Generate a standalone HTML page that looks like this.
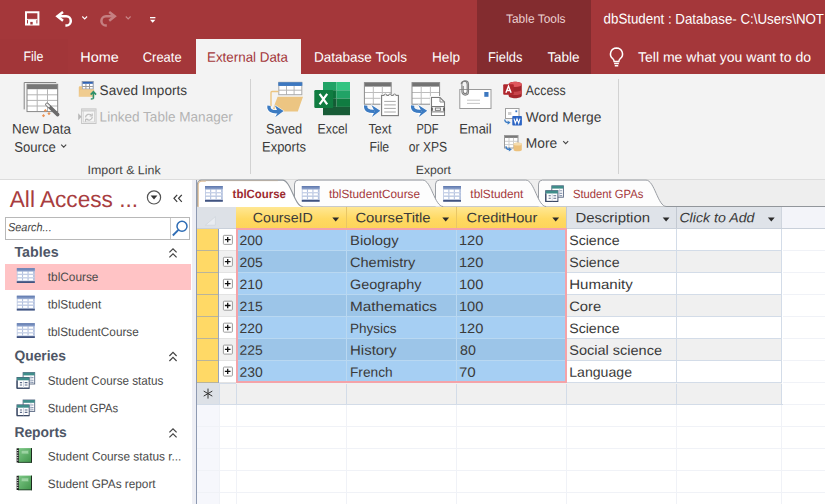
<!DOCTYPE html>
<html><head><meta charset="utf-8"><title>Access</title>
<style>
html,body{margin:0;padding:0;background:#fff;}
#app{position:relative;width:825px;height:504px;overflow:hidden;background:#fff;font-family:"Liberation Sans",sans-serif;}
.a{position:absolute;}
.t{position:absolute;left:0;top:0;white-space:nowrap;transform-origin:0 0;font-family:"Liberation Sans",sans-serif;}
svg{position:absolute;overflow:visible;}

</style></head>
<body>
<div id="app">
<div class="a" style="left:0px;top:0px;width:825px;height:74px;background:#a4373a;"></div>
<div class="a" style="left:0px;top:39px;width:68px;height:35px;background:#a23639;"></div>
<div class="a" style="left:477px;top:0px;width:114px;height:74px;background:#832c2f;"></div>
<div class="a" style="left:196px;top:39px;width:105px;height:35px;background:#f3f3f3;"></div>
<div class="a" style="left:0px;top:74px;width:825px;height:105px;background:#f3f3f3;"></div>
<div class="a" style="left:0px;top:179px;width:825px;height:1px;background:#dcdcdc;"></div>
<div class="a" style="left:250px;top:79px;width:1px;height:95px;background:#d2d2d2;"></div>
<div class="a" style="left:618px;top:79px;width:1px;height:95px;background:#d2d2d2;"></div>
<div class="a" style="left:0px;top:180px;width:192px;height:324px;background:#fff;"></div>
<div class="a" style="left:192px;top:180px;width:4px;height:324px;background:#eeeff5;"></div>
<div class="a" style="left:196px;top:180px;width:1px;height:324px;background:#8e9ab2;"></div>
<div class="a" style="left:5px;top:217px;width:183px;height:21px;background:#fff;border:1px solid #b8b8b8;"></div>
<div class="a" style="left:170px;top:218px;width:1px;height:21px;background:#c9c9c9;"></div>
<div class="a" style="left:5px;top:264px;width:186px;height:26px;background:#ffc3c5;"></div>
<div class="a" style="left:197px;top:180px;width:628px;height:27px;background:#eeeeee;"></div>
<div class="a" style="left:197px;top:206px;width:628px;height:1px;background:#92969b;"></div>
<div class="a" style="left:197px;top:207px;width:39px;height:22px;background:#dde1e7;"></div>
<div class="a" style="left:236px;top:207px;width:330px;height:22px;background:linear-gradient(#ffe793,#ffd961 55%,#fdd45a);"></div>
<div class="a" style="left:346px;top:207px;width:1px;height:22px;background:#e9c665;"></div>
<div class="a" style="left:456px;top:207px;width:1px;height:22px;background:#e9c665;"></div>
<div class="a" style="left:566px;top:207px;width:216px;height:22px;background:#dfe3e9;"></div>
<div class="a" style="left:566px;top:207px;width:1px;height:22px;background:#c3c9d2;"></div>
<div class="a" style="left:676px;top:207px;width:1px;height:22px;background:#c3c9d2;"></div>
<div class="a" style="left:781.2px;top:207px;width:1px;height:22px;background:#cfd5de;"></div>
<div class="a" style="left:782.2px;top:207px;width:43px;height:22px;background:#f3f4f9;"></div>
<div class="a" style="left:197px;top:228.3px;width:628px;height:1px;background:#c9d0da;"></div>
<div class="a" style="left:197px;top:229.05px;width:22px;height:21.95px;background:#ffd966;"></div>
<div class="a" style="left:197px;top:250.0px;width:22px;height:1px;background:#b9b49c;"></div>
<div class="a" style="left:219px;top:229.05px;width:17px;height:21.95px;background:#fff;"></div>
<div class="a" style="left:236px;top:229.05px;width:330px;height:21.95px;background:#a6cff3;"></div>
<div class="a" style="left:566px;top:229.05px;width:216px;height:21.95px;background:#fff;"></div>
<div class="a" style="left:236px;top:250.0px;width:330px;height:1px;background:#b9d8f1;"></div>
<div class="a" style="left:566px;top:250.0px;width:216px;height:1px;background:#d3dce8;"></div>
<div class="a" style="left:219px;top:250.0px;width:17px;height:1px;background:#e3e3e3;"></div>
<div class="a" style="left:197px;top:251.0px;width:22px;height:21.95px;background:#ffd966;"></div>
<div class="a" style="left:197px;top:271.95px;width:22px;height:1px;background:#b9b49c;"></div>
<div class="a" style="left:219px;top:251.0px;width:17px;height:21.95px;background:#f0f0f0;"></div>
<div class="a" style="left:236px;top:251.0px;width:330px;height:21.95px;background:#9cc5e8;"></div>
<div class="a" style="left:566px;top:251.0px;width:216px;height:21.95px;background:#f0f0f0;"></div>
<div class="a" style="left:236px;top:271.95px;width:330px;height:1px;background:#b9d8f1;"></div>
<div class="a" style="left:566px;top:271.95px;width:216px;height:1px;background:#d3dce8;"></div>
<div class="a" style="left:219px;top:271.95px;width:17px;height:1px;background:#e3e3e3;"></div>
<div class="a" style="left:197px;top:272.95px;width:22px;height:21.95px;background:#ffd966;"></div>
<div class="a" style="left:197px;top:293.9px;width:22px;height:1px;background:#b9b49c;"></div>
<div class="a" style="left:219px;top:272.95px;width:17px;height:21.95px;background:#fff;"></div>
<div class="a" style="left:236px;top:272.95px;width:330px;height:21.95px;background:#a6cff3;"></div>
<div class="a" style="left:566px;top:272.95px;width:216px;height:21.95px;background:#fff;"></div>
<div class="a" style="left:236px;top:293.9px;width:330px;height:1px;background:#b9d8f1;"></div>
<div class="a" style="left:566px;top:293.9px;width:216px;height:1px;background:#d3dce8;"></div>
<div class="a" style="left:219px;top:293.9px;width:17px;height:1px;background:#e3e3e3;"></div>
<div class="a" style="left:197px;top:294.9px;width:22px;height:21.95px;background:#ffd966;"></div>
<div class="a" style="left:197px;top:315.84999999999997px;width:22px;height:1px;background:#b9b49c;"></div>
<div class="a" style="left:219px;top:294.9px;width:17px;height:21.95px;background:#f0f0f0;"></div>
<div class="a" style="left:236px;top:294.9px;width:330px;height:21.95px;background:#9cc5e8;"></div>
<div class="a" style="left:566px;top:294.9px;width:216px;height:21.95px;background:#f0f0f0;"></div>
<div class="a" style="left:236px;top:315.84999999999997px;width:330px;height:1px;background:#b9d8f1;"></div>
<div class="a" style="left:566px;top:315.84999999999997px;width:216px;height:1px;background:#d3dce8;"></div>
<div class="a" style="left:219px;top:315.84999999999997px;width:17px;height:1px;background:#e3e3e3;"></div>
<div class="a" style="left:197px;top:316.85px;width:22px;height:21.95px;background:#ffd966;"></div>
<div class="a" style="left:197px;top:337.8px;width:22px;height:1px;background:#b9b49c;"></div>
<div class="a" style="left:219px;top:316.85px;width:17px;height:21.95px;background:#fff;"></div>
<div class="a" style="left:236px;top:316.85px;width:330px;height:21.95px;background:#a6cff3;"></div>
<div class="a" style="left:566px;top:316.85px;width:216px;height:21.95px;background:#fff;"></div>
<div class="a" style="left:236px;top:337.8px;width:330px;height:1px;background:#b9d8f1;"></div>
<div class="a" style="left:566px;top:337.8px;width:216px;height:1px;background:#d3dce8;"></div>
<div class="a" style="left:219px;top:337.8px;width:17px;height:1px;background:#e3e3e3;"></div>
<div class="a" style="left:197px;top:338.8px;width:22px;height:21.95px;background:#ffd966;"></div>
<div class="a" style="left:197px;top:359.75px;width:22px;height:1px;background:#b9b49c;"></div>
<div class="a" style="left:219px;top:338.8px;width:17px;height:21.95px;background:#f0f0f0;"></div>
<div class="a" style="left:236px;top:338.8px;width:330px;height:21.95px;background:#9cc5e8;"></div>
<div class="a" style="left:566px;top:338.8px;width:216px;height:21.95px;background:#f0f0f0;"></div>
<div class="a" style="left:236px;top:359.75px;width:330px;height:1px;background:#b9d8f1;"></div>
<div class="a" style="left:566px;top:359.75px;width:216px;height:1px;background:#d3dce8;"></div>
<div class="a" style="left:219px;top:359.75px;width:17px;height:1px;background:#e3e3e3;"></div>
<div class="a" style="left:197px;top:360.75px;width:22px;height:21.95px;background:#ffd966;"></div>
<div class="a" style="left:197px;top:381.7px;width:22px;height:1px;background:#b9b49c;"></div>
<div class="a" style="left:219px;top:360.75px;width:17px;height:21.95px;background:#fff;"></div>
<div class="a" style="left:236px;top:360.75px;width:330px;height:21.95px;background:#a6cff3;"></div>
<div class="a" style="left:566px;top:360.75px;width:216px;height:21.95px;background:#fff;"></div>
<div class="a" style="left:236px;top:381.7px;width:330px;height:1px;background:#b9d8f1;"></div>
<div class="a" style="left:566px;top:381.7px;width:216px;height:1px;background:#d3dce8;"></div>
<div class="a" style="left:219px;top:381.7px;width:17px;height:1px;background:#e3e3e3;"></div>
<div class="a" style="left:346px;top:229px;width:1px;height:154px;background:#b9d8f1;"></div>
<div class="a" style="left:456px;top:229px;width:1px;height:154px;background:#b9d8f1;"></div>
<div class="a" style="left:676px;top:229px;width:1px;height:176px;background:#d3dce8;"></div>
<div class="a" style="left:781.2px;top:229px;width:1px;height:176px;background:#d3dce8;"></div>
<div class="a" style="left:218px;top:229px;width:1px;height:154px;background:#9aa5bb;"></div>
<div class="a" style="left:236px;top:228.3px;width:327px;height:151.2px;border:2px solid #f4a3a9;"></div>
<div class="a" style="left:197px;top:382.7px;width:22px;height:22px;background:#dde1e7;"></div>
<div class="a" style="left:219px;top:382.7px;width:562.5px;height:21.5px;background:#f0f0f0;"></div>
<div class="a" style="left:219px;top:383.7px;width:1px;height:21px;background:#d3dce8;"></div>
<div class="a" style="left:236px;top:383.7px;width:1px;height:21px;background:#d3dce8;"></div>
<div class="a" style="left:346px;top:383.7px;width:1px;height:21px;background:#d3dce8;"></div>
<div class="a" style="left:456px;top:383.7px;width:1px;height:21px;background:#d3dce8;"></div>
<div class="a" style="left:566px;top:383.7px;width:1px;height:21px;background:#d3dce8;"></div>
<div class="a" style="left:676px;top:383.7px;width:1px;height:21px;background:#d3dce8;"></div>
<div class="a" style="left:781.2px;top:383.7px;width:1px;height:21px;background:#d3dce8;"></div>
<div class="a" style="left:197px;top:403.7px;width:585.5px;height:1px;background:#d3dce8;"></div>
<div class="a" style="left:219px;top:382.7px;width:17px;height:1px;background:#d3dce8;"></div>
<div class="a" style="left:197px;top:404.7px;width:22px;height:100px;background:#f6f7fc;"></div>
<div class="a" style="left:219px;top:404.7px;width:1px;height:100px;background:#f0f2f7;"></div>
<div class="a" style="left:236px;top:404.7px;width:1px;height:100px;background:#f0f2f7;"></div>
<div class="a" style="left:346px;top:404.7px;width:1px;height:100px;background:#f0f2f7;"></div>
<div class="a" style="left:456px;top:404.7px;width:1px;height:100px;background:#f0f2f7;"></div>
<div class="a" style="left:566px;top:404.7px;width:1px;height:100px;background:#f0f2f7;"></div>
<div class="a" style="left:676px;top:404.7px;width:1px;height:100px;background:#f0f2f7;"></div>
<div class="a" style="left:781.2px;top:404.7px;width:1px;height:100px;background:#f0f2f7;"></div>
<div class="a" style="left:197px;top:425.7px;width:628px;height:1px;background:#f0f2f7;"></div>
<div class="a" style="left:197px;top:447.7px;width:628px;height:1px;background:#f0f2f7;"></div>
<div class="a" style="left:197px;top:469.7px;width:628px;height:1px;background:#f0f2f7;"></div>
<div class="a" style="left:197px;top:491.7px;width:628px;height:1px;background:#f0f2f7;"></div>
<div class="a" style="left:782.5px;top:249.7px;width:43px;height:1px;background:#f0f2f7;"></div>
<div class="a" style="left:782.5px;top:271.7px;width:43px;height:1px;background:#f0f2f7;"></div>
<div class="a" style="left:782.5px;top:293.7px;width:43px;height:1px;background:#f0f2f7;"></div>
<div class="a" style="left:782.5px;top:315.7px;width:43px;height:1px;background:#f0f2f7;"></div>
<div class="a" style="left:782.5px;top:337.7px;width:43px;height:1px;background:#f0f2f7;"></div>
<div class="a" style="left:782.5px;top:359.7px;width:43px;height:1px;background:#f0f2f7;"></div>
<div class="a" style="left:782.5px;top:381.7px;width:43px;height:1px;background:#f0f2f7;"></div>
<div class="a" style="left:782.5px;top:403.7px;width:43px;height:1px;background:#f0f2f7;"></div>
<svg style="left:0;top:0" width="825" height="504" viewBox="0 0 825 504"><g transform="translate(25,11.3)"><path d="M1 1h12.4v12.3H1z" fill="none" stroke="#fff" stroke-width="2"/><rect x="2" y="7.6" width="10.4" height="1.2" fill="#fff" opacity="0.85"/><rect x="3" y="8.6" width="8.4" height="5" fill="#fff"/><rect x="5.3" y="10.6" width="2.4" height="2.6" fill="#a4373a"/></g>
<g transform="translate(56,11)"><path d="M1.6 5.3H10.2a4.6 4.6 0 0 1 0 9.2H9.4" fill="none" stroke="#fff" stroke-width="2.5"/><path d="M7 0.9L1.4 5.3l5.6 4.4" fill="none" stroke="#fff" stroke-width="2.5"/></g>
<path d="M82.3 16.5l2.4 2.4 2.4-2.4" fill="none" stroke="#fff" stroke-width="1.1"/>
<g transform="translate(116.2,11) scale(-1,1)" opacity="0.36"><path d="M1.6 5.3H10.2a4.6 4.6 0 0 1 0 9.2H9.4" fill="none" stroke="#fff" stroke-width="2.5"/><path d="M7 0.9L1.4 5.3l5.6 4.4" fill="none" stroke="#fff" stroke-width="2.5"/></g>
<path d="M125.8 16.5l2.4 2.4 2.4-2.4" fill="none" stroke="#fff" stroke-width="1.1" opacity="0.4"/>
<rect x="150" y="17" width="5.4" height="1.3" fill="#fff"/><path d="M150 19.8h5.4l-2.7 2.9z" fill="#fff"/>
<g transform="translate(608.4,46.6) scale(1.08)" fill="none" stroke="#fff"><path d="M7.5 1.2a5.6 5.6 0 0 0-3.4 10c.8.7 1.2 1.5 1.2 2.6h4.4c0-1.1.4-1.9 1.2-2.6a5.6 5.6 0 0 0-3.4-10z" stroke-width="1.4"/><path d="M5.3 15.7h4.4M5.9 17.7h3.2" stroke-width="1.3"/></g>
<path d="M24.2 109.4V82.5H56.2" fill="none" stroke="#858585" stroke-width="1"/>
<rect x="25.6" y="83.4" width="33" height="29" fill="#f8f8f8"/>
<rect x="27" y="84.3" width="30.7" height="27.3" fill="#fff"/><rect x="27" y="84.3" width="30.7" height="4.9" fill="#777777"/><path d="M37.2 89.2V111.6" stroke="#b4b4b4" stroke-width="1"/><path d="M47.5 89.2V111.6" stroke="#b4b4b4" stroke-width="1"/><path d="M27 94.8H57.7" stroke="#b4b4b4" stroke-width="1"/><path d="M27 100.4H57.7" stroke="#b4b4b4" stroke-width="1"/><path d="M27 106.0H57.7" stroke="#b4b4b4" stroke-width="1"/><rect x="27" y="84.3" width="30.7" height="27.3" fill="none" stroke="#858585" stroke-width="1"/>
<path d="M47 104.4l10.7 10.2" stroke="#6b6b6b" stroke-width="3.6" stroke-linecap="round"/><path d="M47 104.4l1.9 1.8" stroke="#f0f0f0" stroke-width="2" stroke-linecap="round"/>
<path d="M45.4 108.9l1.6 1.6-1.6 1.6-1.6-1.6z M49 112l1.6 1.6-1.6 1.6-1.6-1.6z M43.5 114.1l1.6 1.6-1.6 1.6-1.6-1.6z" fill="#ea9254"/>
<path d="M61.2 144.7l2.5 2.5 2.5-2.5" fill="none" stroke="#444" stroke-width="1.1"/>
<rect x="82.2" y="81.5" width="11" height="7.6" fill="#fff"/><rect x="82.2" y="81.5" width="11" height="2.3" fill="#2f63b5"/><path d="M85.9 83.8V89.1" stroke="#9a9a9a" stroke-width="1"/><path d="M89.5 83.8V89.1" stroke="#9a9a9a" stroke-width="1"/><path d="M82.2 86.5H93.2" stroke="#9a9a9a" stroke-width="1"/><rect x="82.2" y="81.5" width="11" height="7.6" fill="none" stroke="#8f9bb0" stroke-width="1"/>
<path d="M78.8 96.6V87.3a1 1 0 0 1 1-1h2.4v3h11.9v7.3z" fill="#ecc483"/><path d="M78.8 96.6l1.2-6.6h14.1v6.6z" fill="#f0cc90"/>
<path d="M93.4 98.4v-6.2M90.7 94.6l2.7-2.9 2.7 2.9" fill="none" stroke="#2e906a" stroke-width="1.6"/><path d="M93.4 98.2c0 .6-1.2.8-2.6.8" fill="none" stroke="#2e906a" stroke-width="1.3"/>
<rect x="81.6" y="108.9" width="14.4" height="14.6" fill="#f6f6f6" stroke="#c6c6c6"/><rect x="83.2" y="110.6" width="11.2" height="11.4" fill="none" stroke="#cfcfcf" stroke-width="0.8"/><rect x="82" y="109.4" width="13.6" height="2.2" fill="#d2d2d2"/>
<path d="M78.2 113.2l3.4 3.5-3.4 3.5z" fill="#b8b8b8"/>
<path d="M85.5 117.4a3.4 3.4 0 0 1 6-1.9M92.3 117a3.4 3.4 0 0 1-6 1.9" fill="none" stroke="#bcbcbc" stroke-width="1.2"/><path d="M92.2 113.4v2.6h-2.6M85.6 121.8v-2.6h2.6" fill="none" stroke="#bcbcbc" stroke-width="1.1"/>
<rect x="278.8" y="82.3" width="23" height="12.4" fill="#fff"/><rect x="278.8" y="82.3" width="23" height="3.5" fill="#3d78c0"/><path d="M286.5 85.8V94.7" stroke="#b5b5b5" stroke-width="1"/><path d="M294.1 85.8V94.7" stroke="#b5b5b5" stroke-width="1"/><path d="M278.8 90.2H301.8" stroke="#b5b5b5" stroke-width="1"/><rect x="278.8" y="82.3" width="23" height="12.4" fill="none" stroke="#a9a9a9" stroke-width="1"/>
<rect x="278.3" y="82.3" width="24" height="3.5" fill="#3d78c0"/>
<path d="M278.5 91.5h-6.5a1 1 0 0 0-1 1v14" fill="none" stroke="#ecc582" stroke-width="1.4"/>
<path d="M277.6 96.8H303l-5.2 14.8H274.3l-1.2-3.2z" fill="#ecc582"/>
<g transform="translate(267.4,105)"><path d="M1.6 0.6c-.6 4.6 2.8 6.6 9 6.2" fill="none" stroke="#fff" stroke-width="5" opacity="0.9"/><path d="M7.2 -0.6l9.9 6.6-9.4 6.8z" fill="#fff" opacity="0.9"/><path d="M1.6 0.8c-.6 4.4 2.8 6.3 9 5.9" fill="none" stroke="#3c7bc2" stroke-width="3.3"/><path d="M7.3 0.2L16.2 6.1L7.8 12.2L10.6 6.9Z" fill="#3c7bc2"/></g>
<rect x="323" y="82" width="13.5" height="8.3" fill="#21a366"/><rect x="336.5" y="82" width="13.5" height="8.3" fill="#33c481"/>
<rect x="323" y="90.3" width="13.5" height="8.3" fill="#107c41"/><rect x="336.5" y="90.3" width="13.5" height="8.3" fill="#21a366"/>
<rect x="323" y="98.6" width="13.5" height="8.3" fill="#185c37"/><rect x="336.5" y="98.6" width="13.5" height="8.3" fill="#107c41"/>
<rect x="323" y="106.9" width="27" height="8.3" fill="#185c37"/>
<rect x="314.3" y="90" width="19" height="18" rx="1.2" fill="#107c41"/><rect x="333.3" y="90.5" width="2" height="17.5" fill="#0b5a30" opacity="0.35"/>
<path d="M319.6 93.8l7.6 10.6M327.2 93.8l-7.6 10.6" stroke="#fff" stroke-width="2.2"/>
<rect x="364.4" y="82.6" width="26.8" height="21.6" fill="#fff"/><rect x="364.4" y="82.6" width="26.8" height="4" fill="#727272"/><path d="M373.3 86.6V104.19999999999999" stroke="#bdbdbd" stroke-width="1"/><path d="M382.3 86.6V104.19999999999999" stroke="#bdbdbd" stroke-width="1"/><path d="M364.4 92.5H391.2" stroke="#bdbdbd" stroke-width="1"/><path d="M364.4 98.3H391.2" stroke="#bdbdbd" stroke-width="1"/><rect x="364.4" y="82.6" width="26.8" height="21.6" fill="none" stroke="#8c8c8c" stroke-width="1"/>
<rect x="380.4" y="94" width="19.2" height="22.8" fill="#f3f3f3"/><rect x="381.6" y="95.4" width="16.8" height="20.2" fill="#fff" stroke="#7c7c7c" stroke-width="1.1"/>
<path d="M385.4 94.3v2.2M390 94.3v2.2M394.6 94.3v2.2" stroke="#f3f3f3" stroke-width="2.2"/><path d="M384 95.4a1.4 1.4 0 0 1 2.8 0M388.6 95.4a1.4 1.4 0 0 1 2.8 0M393.2 95.4a1.4 1.4 0 0 1 2.8 0" fill="none" stroke="#7c7c7c" stroke-width="0.9"/>
<path d="M384.2 101.4h11.6M384.2 104.9h11.6M384.2 108.4h11.6M384.2 112h11.6" stroke="#a8a8a8" stroke-width="1"/>
<g transform="translate(364.1,104.7)"><path d="M1.6 0.6c-.6 4.6 2.8 6.6 9 6.2" fill="none" stroke="#fff" stroke-width="5" opacity="0.9"/><path d="M7.2 -0.6l9.9 6.6-9.4 6.8z" fill="#fff" opacity="0.9"/><path d="M1.6 0.8c-.6 4.4 2.8 6.3 9 5.9" fill="none" stroke="#3c7bc2" stroke-width="3.3"/><path d="M7.3 0.2L16.2 6.1L7.8 12.2L10.6 6.9Z" fill="#3c7bc2"/></g>
<rect x="412" y="82.6" width="27.6" height="21.6" fill="#fff"/><rect x="412" y="82.6" width="27.6" height="4" fill="#727272"/><path d="M421.2 86.6V104.19999999999999" stroke="#bdbdbd" stroke-width="1"/><path d="M430.4 86.6V104.19999999999999" stroke="#bdbdbd" stroke-width="1"/><path d="M412 92.5H439.6" stroke="#bdbdbd" stroke-width="1"/><path d="M412 98.3H439.6" stroke="#bdbdbd" stroke-width="1"/><rect x="412" y="82.6" width="27.6" height="21.6" fill="none" stroke="#8c8c8c" stroke-width="1"/>
<rect x="430" y="96" width="16" height="20.8" fill="#f3f3f3"/><path d="M431.5 97.5h8.5l4.5 4.5v13.5h-13z" fill="#fff" stroke="#7c7c7c" stroke-width="1.1"/><path d="M440 97.5v4.5h4.5" fill="none" stroke="#8a8a8a"/>
<rect x="431.5" y="106.5" width="13" height="5.4" fill="#f1f1f1" stroke="#7a7a7a"/><rect x="435.4" y="108" width="5" height="2.4" fill="none" stroke="#7a7a7a" stroke-width="0.9"/><rect x="431.2" y="107.6" width="1.6" height="3.2" fill="#555"/><rect x="443.2" y="107.6" width="1.6" height="3.2" fill="#555"/>
<g transform="translate(411,104.7)"><path d="M1.6 0.6c-.6 4.6 2.8 6.6 9 6.2" fill="none" stroke="#fff" stroke-width="5" opacity="0.9"/><path d="M7.2 -0.6l9.9 6.6-9.4 6.8z" fill="#fff" opacity="0.9"/><path d="M1.6 0.8c-.6 4.4 2.8 6.3 9 5.9" fill="none" stroke="#3c7bc2" stroke-width="3.3"/><path d="M7.3 0.2L16.2 6.1L7.8 12.2L10.6 6.9Z" fill="#3c7bc2"/></g>
<rect x="459.8" y="89.5" width="31.2" height="19" fill="#fff" stroke="#9a9a9a"/>
<rect x="484.3" y="92" width="4.2" height="4.8" fill="#3d78c0"/>
<path d="M467 100.2h13M467 103.4h13" stroke="#c6c6c6" stroke-width="1"/>
<path d="M463.2 86v5.6a2 2 0 0 0 4 0V84.3a3 3 0 0 0-6 0" fill="none" stroke="#7f7f7f" stroke-width="1.1"/><path d="M461.2 84.3v7.6a4 4 0 0 0 7.6 0" fill="none" stroke="#7f7f7f" stroke-width="1.1" opacity="0"/>
<path d="M461.9 84.4v7.4a3.3 3.3 0 0 0 6.6 0V84.2a3.3 3.3 0 0 0-6.6 0" fill="none" stroke="#7f7f7f" stroke-width="1.1"/>
<path d="M508.6 84.4c0-3.4 13.2-3.4 13.2 0v11.2c0 3.6-13.2 3.6-13.2 0z" fill="#a4262c"/><ellipse cx="515.2" cy="84.4" rx="6.6" ry="2.7" fill="#e0575d"/><path d="M508.6 89.6c1 2.8 12.2 2.8 13.2 0v3.4c-1 2.8-12.2 2.8-13.2 0z" fill="#c8444a"/>
<rect x="503.2" y="84.2" width="10.6" height="10.6" rx="1" fill="#b0262c"/><path d="M505.9 92.7l2.6-6.6 2.6 6.6M506.9 90.5h3.2" fill="none" stroke="#fff" stroke-width="1.4"/>
<rect x="505.5" y="108.5" width="13.5" height="10" fill="#fff" stroke="#a0a0a0"/><rect x="508" y="112" width="3.4" height="3" fill="#d0d0d0"/><rect x="515.4" y="110.4" width="1.8" height="1.8" fill="#3d78c0"/>
<rect x="512.3" y="116" width="9.6" height="9.6" rx="0.8" fill="#2b64c4"/><path d="M514 118.6l1.3 4.6 1.7-4.4 1.7 4.4 1.3-4.6" fill="none" stroke="#fff" stroke-width="1.1"/>
<path d="M504.8 119.6c0 2.2 1.2 3 3.4 3" fill="none" stroke="#3d7cc4" stroke-width="1.4"/><path d="M507.6 120.4l3 2.2-3 2.2z" fill="#3d7cc4"/>
<rect x="504.5" y="135.5" width="13.5" height="12.5" fill="#fff"/><rect x="504.5" y="135.5" width="13.5" height="2.4" fill="#7a7a7a"/><path d="M509.0 137.9V148.0" stroke="#cdcdcd" stroke-width="1"/><path d="M513.5 137.9V148.0" stroke="#cdcdcd" stroke-width="1"/><path d="M504.5 141.3H518.0" stroke="#cdcdcd" stroke-width="1"/><path d="M504.5 144.6H518.0" stroke="#cdcdcd" stroke-width="1"/><rect x="504.5" y="135.5" width="13.5" height="12.5" fill="none" stroke="#9a9a9a" stroke-width="1"/>
<path d="M513.6 144c0-1.6 8.2-1.6 8.2 0v6c0 1.8-8.2 1.8-8.2 0z" fill="#ecc17c"/><ellipse cx="517.7" cy="144" rx="4.1" ry="1.5" fill="#f5dcae"/>
<path d="M506 146.2c0 2.4 1.2 3.2 3.4 3.2" fill="none" stroke="#3d7cc4" stroke-width="1.4"/><path d="M508.8 147.2l3 2.2-3 2.2z" fill="#3d7cc4"/>
<path d="M563.2 141.2l2.5 2.5 2.5-2.5" fill="none" stroke="#444" stroke-width="1.1"/>
<circle cx="154" cy="197.4" r="6.6" fill="#fff" stroke="#555" stroke-width="1.2"/><path d="M150.6 195.6h6.8l-3.4 4z" fill="#333"/>
<path d="M177.2 194.8l-3.2 3.5 3.2 3.5M181.8 194.8l-3.2 3.5 3.2 3.5" fill="none" stroke="#3c3c3c" stroke-width="1.25"/>
<circle cx="182" cy="226.2" r="5" fill="none" stroke="#2f6db5" stroke-width="1.5"/><path d="M178.4 229.9l-5.6 5.6" stroke="#2f6db5" stroke-width="1.9"/>
<path d="M169.4 252.39999999999998l3.6-3.6 3.6 3.6M169.4 257.4l3.6-3.6 3.6 3.6" fill="none" stroke="#444" stroke-width="1.2"/>
<path d="M169.4 356.0l3.6-3.6 3.6 3.6M169.4 361.0l3.6-3.6 3.6 3.6" fill="none" stroke="#444" stroke-width="1.2"/>
<path d="M169.4 432.4l3.6-3.6 3.6 3.6M169.4 437.4l3.6-3.6 3.6 3.6" fill="none" stroke="#444" stroke-width="1.2"/>
<defs><linearGradient id="th" x1="0" y1="0" x2="0" y2="1"><stop offset="0" stop-color="#5b75ab"/><stop offset="1" stop-color="#8fa4cd"/></linearGradient></defs>
<defs><linearGradient id="rg" x1="0" y1="0" x2="1" y2="1"><stop offset="0" stop-color="#7fca88"/><stop offset="1" stop-color="#3f9349"/></linearGradient></defs>
<g transform="translate(16.8,268.2)"><rect x="0" y="0" width="18" height="14.8" fill="#b3c1de"/><rect x="0" y="0" width="18" height="3.03" fill="url(#th)"/><rect x="0.75" y="3.53" width="4.43" height="2.07" fill="#fff"/><rect x="6.28" y="3.53" width="4.43" height="2.07" fill="#fff"/><rect x="11.82" y="3.53" width="4.43" height="2.07" fill="#fff"/><rect x="0.4" y="5.61" width="17.2" height="0.6" fill="#d6deef"/><rect x="0.75" y="6.86" width="4.43" height="2.07" fill="#fff"/><rect x="6.28" y="6.86" width="4.43" height="2.07" fill="#fff"/><rect x="11.82" y="6.86" width="4.43" height="2.07" fill="#fff"/><rect x="0.4" y="8.93" width="17.2" height="0.6" fill="#d6deef"/><rect x="0.75" y="10.18" width="4.43" height="2.07" fill="#fff"/><rect x="6.28" y="10.18" width="4.43" height="2.07" fill="#fff"/><rect x="11.82" y="10.18" width="4.43" height="2.07" fill="#fff"/><rect x="0.4" y="12.25" width="17.2" height="0.6" fill="#d6deef"/><rect x="0" y="13.0" width="18" height="1.8" fill="#41537f"/></g>
<g transform="translate(16.8,295.7)"><rect x="0" y="0" width="18" height="14.8" fill="#b3c1de"/><rect x="0" y="0" width="18" height="3.03" fill="url(#th)"/><rect x="0.75" y="3.53" width="4.43" height="2.07" fill="#fff"/><rect x="6.28" y="3.53" width="4.43" height="2.07" fill="#fff"/><rect x="11.82" y="3.53" width="4.43" height="2.07" fill="#fff"/><rect x="0.4" y="5.61" width="17.2" height="0.6" fill="#d6deef"/><rect x="0.75" y="6.86" width="4.43" height="2.07" fill="#fff"/><rect x="6.28" y="6.86" width="4.43" height="2.07" fill="#fff"/><rect x="11.82" y="6.86" width="4.43" height="2.07" fill="#fff"/><rect x="0.4" y="8.93" width="17.2" height="0.6" fill="#d6deef"/><rect x="0.75" y="10.18" width="4.43" height="2.07" fill="#fff"/><rect x="6.28" y="10.18" width="4.43" height="2.07" fill="#fff"/><rect x="11.82" y="10.18" width="4.43" height="2.07" fill="#fff"/><rect x="0.4" y="12.25" width="17.2" height="0.6" fill="#d6deef"/><rect x="0" y="13.0" width="18" height="1.8" fill="#41537f"/></g>
<g transform="translate(16.8,323.2)"><rect x="0" y="0" width="18" height="14.8" fill="#b3c1de"/><rect x="0" y="0" width="18" height="3.03" fill="url(#th)"/><rect x="0.75" y="3.53" width="4.43" height="2.07" fill="#fff"/><rect x="6.28" y="3.53" width="4.43" height="2.07" fill="#fff"/><rect x="11.82" y="3.53" width="4.43" height="2.07" fill="#fff"/><rect x="0.4" y="5.61" width="17.2" height="0.6" fill="#d6deef"/><rect x="0.75" y="6.86" width="4.43" height="2.07" fill="#fff"/><rect x="6.28" y="6.86" width="4.43" height="2.07" fill="#fff"/><rect x="11.82" y="6.86" width="4.43" height="2.07" fill="#fff"/><rect x="0.4" y="8.93" width="17.2" height="0.6" fill="#d6deef"/><rect x="0.75" y="10.18" width="4.43" height="2.07" fill="#fff"/><rect x="6.28" y="10.18" width="4.43" height="2.07" fill="#fff"/><rect x="11.82" y="10.18" width="4.43" height="2.07" fill="#fff"/><rect x="0.4" y="12.25" width="17.2" height="0.6" fill="#d6deef"/><rect x="0" y="13.0" width="18" height="1.8" fill="#41537f"/></g>
<g transform="translate(16.5,372.2)"><rect x="6.6" y="0.4" width="11.6" height="11.4" fill="#fff" stroke="#55647f" stroke-width="0.9"/><rect x="6.6" y="0.4" width="11.6" height="2.8" fill="#3f8d8a"/><path d="M13.6 5.4h3.4M13.6 8h3.4M13.6 10.2h3.4" stroke="#8c9ab3" stroke-width="1.1"/><path d="M14.4 3.4v8" stroke="#c5cddb" stroke-width="0.8"/><rect x="0.5" y="5.3" width="12.2" height="10.8" fill="#fff" stroke="#4a5975" stroke-width="1"/><rect x="0.5" y="5.3" width="12.2" height="2.8" fill="#3f8d8a"/><path d="M0.6 8.4v7.6" stroke="#3a4864" stroke-width="1.2"/><path d="M0.5 16h12.2" stroke="#3a4864" stroke-width="1.1"/><path d="M3.4 10.4h2.2M3.4 12.8h2.2M8.2 10.4h2.8M8.2 12.8h2.8" stroke="#5d6c8a" stroke-width="1.1"/><path d="M7 8.2v7.6" stroke="#c5cddb" stroke-width="0.8"/></g>
<g transform="translate(16.5,399.6)"><rect x="6.6" y="0.4" width="11.6" height="11.4" fill="#fff" stroke="#55647f" stroke-width="0.9"/><rect x="6.6" y="0.4" width="11.6" height="2.8" fill="#3f8d8a"/><path d="M13.6 5.4h3.4M13.6 8h3.4M13.6 10.2h3.4" stroke="#8c9ab3" stroke-width="1.1"/><path d="M14.4 3.4v8" stroke="#c5cddb" stroke-width="0.8"/><rect x="0.5" y="5.3" width="12.2" height="10.8" fill="#fff" stroke="#4a5975" stroke-width="1"/><rect x="0.5" y="5.3" width="12.2" height="2.8" fill="#3f8d8a"/><path d="M0.6 8.4v7.6" stroke="#3a4864" stroke-width="1.2"/><path d="M0.5 16h12.2" stroke="#3a4864" stroke-width="1.1"/><path d="M3.4 10.4h2.2M3.4 12.8h2.2M8.2 10.4h2.8M8.2 12.8h2.8" stroke="#5d6c8a" stroke-width="1.1"/><path d="M7 8.2v7.6" stroke="#c5cddb" stroke-width="0.8"/></g>
<g transform="translate(16.4,448.1)"><rect x="1.6" y="0" width="13.8" height="14.4" fill="url(#rg)"/><rect x="4.8" y="2.4" width="7.2" height="3.4" fill="#9bd3a1" stroke="#6fb678" stroke-width="0.6"/><rect x="14.6" y="0" width="1" height="14.6" fill="#1c2a1e"/><rect x="1.6" y="13.8" width="14" height="0.9" fill="#23402a"/><rect x="0.2" y="0.2" width="2.2" height="14.2" fill="#1d1d1d"/><path d="M0.4 2.4h1.5M0.4 4.8h1.5M0.4 7.2h1.5M0.4 9.6h1.5M0.4 12h1.5" stroke="#fff" stroke-width="0.9"/></g>
<g transform="translate(16.4,475.6)"><rect x="1.6" y="0" width="13.8" height="14.4" fill="url(#rg)"/><rect x="4.8" y="2.4" width="7.2" height="3.4" fill="#9bd3a1" stroke="#6fb678" stroke-width="0.6"/><rect x="14.6" y="0" width="1" height="14.6" fill="#1c2a1e"/><rect x="1.6" y="13.8" width="14" height="0.9" fill="#23402a"/><rect x="0.2" y="0.2" width="2.2" height="14.2" fill="#1d1d1d"/><path d="M0.4 2.4h1.5M0.4 4.8h1.5M0.4 7.2h1.5M0.4 9.6h1.5M0.4 12h1.5" stroke="#fff" stroke-width="0.9"/></g>
<path d="M538.5 206.5V184.1a4 4 0 0 1 4-4H646c8.5 0 11.8 26.400000000000006 20.3 26.400000000000006Z" fill="#fdfdfd"/>
<path d="M538.5 206.5V184.1a4 4 0 0 1 4-4H646c8.5 0 11.8 26.400000000000006 20.3 26.400000000000006" fill="none" stroke="#9a9ea4" stroke-width="1"/>
<path d="M435.5 206.5V184.1a4 4 0 0 1 4-4H525.8c8.5 0 11.8 26.400000000000006 20.3 26.400000000000006Z" fill="#fdfdfd"/>
<path d="M435.5 206.5V184.1a4 4 0 0 1 4-4H525.8c8.5 0 11.8 26.400000000000006 20.3 26.400000000000006" fill="none" stroke="#9a9ea4" stroke-width="1"/>
<path d="M294.5 206.5V184.1a4 4 0 0 1 4-4H422.8c8.5 0 11.8 26.400000000000006 20.3 26.400000000000006Z" fill="#fdfdfd"/>
<path d="M294.5 206.5V184.1a4 4 0 0 1 4-4H422.8c8.5 0 11.8 26.400000000000006 20.3 26.400000000000006" fill="none" stroke="#9a9ea4" stroke-width="1"/>
<path d="M197.5 206.5V184.1a4 4 0 0 1 4-4H282.5c8.5 0 11.8 26.400000000000006 20.3 26.400000000000006V207H197.5Z" fill="#fff"/>
<path d="M197.5 206.5V184.1a4 4 0 0 1 4-4H282.5c8.5 0 11.8 26.400000000000006 20.3 26.400000000000006" fill="none" stroke="#8f959c" stroke-width="1.1"/>
<path d="M198.2 207V184.8a3.6 3.6 0 0 1 3.6-3.6h4" fill="none" stroke="#e0c09a" stroke-width="1.2"/><path d="M205.8 180.7h72" fill="none" stroke="#c9b090" stroke-width="0.9" opacity="0.55"/>
<g transform="translate(205,186)"><rect x="0" y="0" width="17.8" height="15.7" fill="#b3c1de"/><rect x="0" y="0" width="17.8" height="3.22" fill="url(#th)"/><rect x="0.75" y="3.72" width="4.37" height="2.31" fill="#fff"/><rect x="6.22" y="3.72" width="4.37" height="2.31" fill="#fff"/><rect x="11.68" y="3.72" width="4.37" height="2.31" fill="#fff"/><rect x="0.4" y="6.03" width="17.0" height="0.6" fill="#d6deef"/><rect x="0.75" y="7.28" width="4.37" height="2.31" fill="#fff"/><rect x="6.22" y="7.28" width="4.37" height="2.31" fill="#fff"/><rect x="11.68" y="7.28" width="4.37" height="2.31" fill="#fff"/><rect x="0.4" y="9.59" width="17.0" height="0.6" fill="#d6deef"/><rect x="0.75" y="10.84" width="4.37" height="2.31" fill="#fff"/><rect x="6.22" y="10.84" width="4.37" height="2.31" fill="#fff"/><rect x="11.68" y="10.84" width="4.37" height="2.31" fill="#fff"/><rect x="0.4" y="13.15" width="17.0" height="0.6" fill="#d6deef"/><rect x="0" y="13.899999999999999" width="17.8" height="1.8" fill="#41537f"/></g>
<g transform="translate(301.8,186)"><rect x="0" y="0" width="17.8" height="15.7" fill="#b3c1de"/><rect x="0" y="0" width="17.8" height="3.22" fill="url(#th)"/><rect x="0.75" y="3.72" width="4.37" height="2.31" fill="#fff"/><rect x="6.22" y="3.72" width="4.37" height="2.31" fill="#fff"/><rect x="11.68" y="3.72" width="4.37" height="2.31" fill="#fff"/><rect x="0.4" y="6.03" width="17.0" height="0.6" fill="#d6deef"/><rect x="0.75" y="7.28" width="4.37" height="2.31" fill="#fff"/><rect x="6.22" y="7.28" width="4.37" height="2.31" fill="#fff"/><rect x="11.68" y="7.28" width="4.37" height="2.31" fill="#fff"/><rect x="0.4" y="9.59" width="17.0" height="0.6" fill="#d6deef"/><rect x="0.75" y="10.84" width="4.37" height="2.31" fill="#fff"/><rect x="6.22" y="10.84" width="4.37" height="2.31" fill="#fff"/><rect x="11.68" y="10.84" width="4.37" height="2.31" fill="#fff"/><rect x="0.4" y="13.15" width="17.0" height="0.6" fill="#d6deef"/><rect x="0" y="13.899999999999999" width="17.8" height="1.8" fill="#41537f"/></g>
<g transform="translate(443.2,186)"><rect x="0" y="0" width="17.8" height="15.7" fill="#b3c1de"/><rect x="0" y="0" width="17.8" height="3.22" fill="url(#th)"/><rect x="0.75" y="3.72" width="4.37" height="2.31" fill="#fff"/><rect x="6.22" y="3.72" width="4.37" height="2.31" fill="#fff"/><rect x="11.68" y="3.72" width="4.37" height="2.31" fill="#fff"/><rect x="0.4" y="6.03" width="17.0" height="0.6" fill="#d6deef"/><rect x="0.75" y="7.28" width="4.37" height="2.31" fill="#fff"/><rect x="6.22" y="7.28" width="4.37" height="2.31" fill="#fff"/><rect x="11.68" y="7.28" width="4.37" height="2.31" fill="#fff"/><rect x="0.4" y="9.59" width="17.0" height="0.6" fill="#d6deef"/><rect x="0.75" y="10.84" width="4.37" height="2.31" fill="#fff"/><rect x="6.22" y="10.84" width="4.37" height="2.31" fill="#fff"/><rect x="11.68" y="10.84" width="4.37" height="2.31" fill="#fff"/><rect x="0.4" y="13.15" width="17.0" height="0.6" fill="#d6deef"/><rect x="0" y="13.899999999999999" width="17.8" height="1.8" fill="#41537f"/></g>
<g transform="translate(545.2,185.4)"><rect x="6.6" y="0.4" width="11.6" height="11.4" fill="#fff" stroke="#55647f" stroke-width="0.9"/><rect x="6.6" y="0.4" width="11.6" height="2.8" fill="#3f8d8a"/><path d="M13.6 5.4h3.4M13.6 8h3.4M13.6 10.2h3.4" stroke="#8c9ab3" stroke-width="1.1"/><path d="M14.4 3.4v8" stroke="#c5cddb" stroke-width="0.8"/><rect x="0.5" y="5.3" width="12.2" height="10.8" fill="#fff" stroke="#4a5975" stroke-width="1"/><rect x="0.5" y="5.3" width="12.2" height="2.8" fill="#3f8d8a"/><path d="M0.6 8.4v7.6" stroke="#3a4864" stroke-width="1.2"/><path d="M0.5 16h12.2" stroke="#3a4864" stroke-width="1.1"/><path d="M3.4 10.4h2.2M3.4 12.8h2.2M8.2 10.4h2.8M8.2 12.8h2.8" stroke="#5d6c8a" stroke-width="1.1"/><path d="M7 8.2v7.6" stroke="#c5cddb" stroke-width="0.8"/></g>
<path d="M205.4 225.2l10-8.6v8.6z" fill="#e9ecf1" stroke="#d0d5dd" stroke-width="0.7"/>
<path d="M332.29999999999995 217.39999999999998h6.8l-3.4 4z" fill="#2a2a2a"/>
<path d="M442.29999999999995 217.39999999999998h6.8l-3.4 4z" fill="#2a2a2a"/>
<path d="M552.3 217.39999999999998h6.8l-3.4 4z" fill="#2a2a2a"/>
<path d="M662.6999999999999 217.39999999999998h6.8l-3.4 4z" fill="#2a2a2a"/>
<path d="M767.9 217.39999999999998h6.8l-3.4 4z" fill="#2a2a2a"/>
<rect x="223.4" y="235.35" width="9" height="9" rx="0.8" fill="#fff" stroke="#9c9c9c" stroke-width="1"/><path d="M224.9 239.65h5.6M227.7 236.95v5.4" stroke="#111" stroke-width="1.3"/>
<rect x="223.4" y="257.30" width="9" height="9" rx="0.8" fill="#fff" stroke="#9c9c9c" stroke-width="1"/><path d="M224.9 261.60h5.6M227.7 258.90v5.4" stroke="#111" stroke-width="1.3"/>
<rect x="223.4" y="279.25" width="9" height="9" rx="0.8" fill="#fff" stroke="#9c9c9c" stroke-width="1"/><path d="M224.9 283.55h5.6M227.7 280.85v5.4" stroke="#111" stroke-width="1.3"/>
<rect x="223.4" y="301.20" width="9" height="9" rx="0.8" fill="#fff" stroke="#9c9c9c" stroke-width="1"/><path d="M224.9 305.50h5.6M227.7 302.80v5.4" stroke="#111" stroke-width="1.3"/>
<rect x="223.4" y="323.15" width="9" height="9" rx="0.8" fill="#fff" stroke="#9c9c9c" stroke-width="1"/><path d="M224.9 327.45h5.6M227.7 324.75v5.4" stroke="#111" stroke-width="1.3"/>
<rect x="223.4" y="345.10" width="9" height="9" rx="0.8" fill="#fff" stroke="#9c9c9c" stroke-width="1"/><path d="M224.9 349.40h5.6M227.7 346.70v5.4" stroke="#111" stroke-width="1.3"/>
<rect x="223.4" y="367.05" width="9" height="9" rx="0.8" fill="#fff" stroke="#9c9c9c" stroke-width="1"/><path d="M224.9 371.35h5.6M227.7 368.65v5.4" stroke="#111" stroke-width="1.3"/>
<path d="M208 388.6v10M203.7 391.1l8.6 5M203.7 396.1l8.6-5" stroke="#333" stroke-width="1"/></svg>
<span class="t" style="font-size:13.7px;line-height:13.7px;color:#fff;transform:translate(23.40px,50.10px) scaleX(0.9065) rotate(0.03deg);">File</span>
<span class="t" style="font-size:13.7px;line-height:13.7px;color:#fff;transform:translate(80.37px,50.75px) scaleX(1.0527) rotate(0.03deg);">Home</span>
<span class="t" style="font-size:13.7px;line-height:13.7px;color:#fff;transform:translate(142.79px,50.75px) scaleX(0.9444) rotate(0.03deg);">Create</span>
<span class="t" style="font-size:13.7px;line-height:13.7px;color:#a4373a;transform:translate(207.00px,50.75px) scaleX(0.9766) rotate(0.03deg);">External Data</span>
<span class="t" style="font-size:13.7px;line-height:13.7px;color:#fff;transform:translate(314.00px,50.75px) scaleX(0.9882) rotate(0.03deg);">Database Tools</span>
<span class="t" style="font-size:13.7px;line-height:13.7px;color:#fff;transform:translate(432.00px,50.75px) scaleX(0.9945) rotate(0.03deg);">Help</span>
<span class="t" style="font-size:13.7px;line-height:13.7px;color:#fff;transform:translate(488.00px,50.75px) scaleX(0.9423) rotate(0.03deg);">Fields</span>
<span class="t" style="font-size:13.7px;line-height:13.7px;color:#fff;transform:translate(547.39px,50.75px) scaleX(0.9841) rotate(0.03deg);">Table</span>
<span class="t" style="font-size:12px;line-height:12px;color:#ecd0d1;transform:translate(506.00px,12.70px) scaleX(0.9963) rotate(0.03deg);">Table Tools</span>
<span class="t" style="font-size:14.3px;line-height:14.3px;color:#fff;transform:translate(603.60px,11.60px) scaleX(0.9308) rotate(0.03deg);">dbStudent : Database- C:\Users\NOT</span>
<span class="t" style="font-size:13.7px;line-height:13.7px;color:#fff;transform:translate(638.00px,50.75px) scaleX(1.0242) rotate(0.03deg);">Tell me what you want to do</span>
<span class="t" style="font-size:13.8px;line-height:13.8px;color:#3b3b3b;transform:translate(12.00px,122.60px) scaleX(0.9739) rotate(0.03deg);">New Data</span>
<span class="t" style="font-size:13.8px;line-height:13.8px;color:#3b3b3b;transform:translate(14.19px,140.70px) scaleX(0.9519) rotate(0.03deg);">Source</span>
<span class="t" style="font-size:13.8px;line-height:13.8px;color:#3b3b3b;transform:translate(99.59px,83.90px) scaleX(0.9826) rotate(0.03deg);">Saved Imports</span>
<span class="t" style="font-size:13.8px;line-height:13.8px;color:#b4b4b4;transform:translate(99.59px,110.40px) scaleX(0.9830) rotate(0.03deg);">Linked Table Manager</span>
<span class="t" style="font-size:12px;line-height:12px;color:#444;transform:translate(87.59px,164.10px) scaleX(1.0327) rotate(0.03deg);">Import &amp; Link</span>
<span class="t" style="font-size:13.8px;line-height:13.8px;color:#3b3b3b;transform:translate(266.00px,122.60px) scaleX(0.9255) rotate(0.03deg);">Saved</span>
<span class="t" style="font-size:13.8px;line-height:13.8px;color:#3b3b3b;transform:translate(262.00px,140.50px) scaleX(0.9405) rotate(0.03deg);">Exports</span>
<span class="t" style="font-size:13.8px;line-height:13.8px;color:#3b3b3b;transform:translate(317.60px,122.60px) scaleX(0.8889) rotate(0.03deg);">Excel</span>
<span class="t" style="font-size:13.8px;line-height:13.8px;color:#3b3b3b;transform:translate(368.59px,122.60px) scaleX(0.9032) rotate(0.03deg);">Text</span>
<span class="t" style="font-size:13.8px;line-height:13.8px;color:#3b3b3b;transform:translate(369.39px,140.50px) scaleX(0.8915) rotate(0.03deg);">File</span>
<span class="t" style="font-size:13.8px;line-height:13.8px;color:#3b3b3b;transform:translate(416.39px,122.60px) scaleX(0.8046) rotate(0.03deg);">PDF</span>
<span class="t" style="font-size:13.8px;line-height:13.8px;color:#3b3b3b;transform:translate(408.79px,140.50px) scaleX(0.8787) rotate(0.03deg);">or XPS</span>
<span class="t" style="font-size:13.8px;line-height:13.8px;color:#3b3b3b;transform:translate(459.20px,122.60px) scaleX(0.9392) rotate(0.03deg);">Email</span>
<span class="t" style="font-size:13.8px;line-height:13.8px;color:#3b3b3b;transform:translate(525.80px,84.00px) scaleX(0.8949) rotate(0.03deg);">Access</span>
<span class="t" style="font-size:13.8px;line-height:13.8px;color:#3b3b3b;transform:translate(525.80px,110.70px) scaleX(0.9993) rotate(0.03deg);">Word Merge</span>
<span class="t" style="font-size:13.8px;line-height:13.8px;color:#3b3b3b;transform:translate(525.80px,136.70px) scaleX(0.9989) rotate(0.03deg);">More</span>
<span class="t" style="font-size:12px;line-height:12px;color:#444;transform:translate(415.79px,164.10px) scaleX(1.0151) rotate(0.03deg);">Export</span>
<span class="t" style="font-size:23px;line-height:23px;color:#a83d40;transform:translate(9.79px,188.00px) scaleX(0.9834) rotate(0.03deg);">All Access ...</span>
<span class="t" style="font-size:12px;line-height:12px;color:#444;font-style:italic;transform:translate(7.97px,221.30px) scaleX(0.9100) rotate(0.03deg);">Search...</span>
<span class="t" style="font-size:14.2px;line-height:14.2px;color:#4e5666;font-weight:bold;transform:translate(14.40px,244.80px) scaleX(1.0068) rotate(0.03deg);">Tables</span>
<span class="t" style="font-size:14.2px;line-height:14.2px;color:#4e5666;font-weight:bold;transform:translate(14.40px,348.40px) scaleX(0.9765) rotate(0.03deg);">Queries</span>
<span class="t" style="font-size:14.2px;line-height:14.2px;color:#4e5666;font-weight:bold;transform:translate(14.40px,425.00px) scaleX(0.9776) rotate(0.03deg);">Reports</span>
<span class="t" style="font-size:12.2px;line-height:12.2px;color:#4a4a4a;transform:translate(47.80px,271.00px) scaleX(0.9699) rotate(0.03deg);">tblCourse</span>
<span class="t" style="font-size:12.2px;line-height:12.2px;color:#4a4a4a;transform:translate(47.80px,298.40px) scaleX(0.9730) rotate(0.03deg);">tblStudent</span>
<span class="t" style="font-size:12.2px;line-height:12.2px;color:#4a4a4a;transform:translate(47.80px,326.00px) scaleX(0.9662) rotate(0.03deg);">tblStudentCourse</span>
<span class="t" style="font-size:12.2px;line-height:12.2px;color:#4a4a4a;transform:translate(47.79px,374.80px) scaleX(0.9587) rotate(0.03deg);">Student Course status</span>
<span class="t" style="font-size:12.2px;line-height:12.2px;color:#4a4a4a;transform:translate(47.80px,402.20px) scaleX(0.9225) rotate(0.03deg);">Student GPAs</span>
<span class="t" style="font-size:12.2px;line-height:12.2px;color:#4a4a4a;transform:translate(47.80px,450.50px) scaleX(0.9715) rotate(0.03deg);">Student Course status r...</span>
<span class="t" style="font-size:12.2px;line-height:12.2px;color:#4a4a4a;transform:translate(47.80px,478.00px) scaleX(0.9664) rotate(0.03deg);">Student GPAs report</span>
<span class="t" style="font-size:12px;line-height:12px;color:#9c2a30;font-weight:bold;transform:translate(232.59px,188.00px) scaleX(0.9534) rotate(0.03deg);">tblCourse</span>
<span class="t" style="font-size:12px;line-height:12px;color:#a4373a;transform:translate(329.00px,188.00px) scaleX(0.9813) rotate(0.03deg);">tblStudentCourse</span>
<span class="t" style="font-size:12px;line-height:12px;color:#a4373a;transform:translate(470.38px,188.00px) scaleX(0.9810) rotate(0.03deg);">tblStudent</span>
<span class="t" style="font-size:12px;line-height:12px;color:#a4373a;transform:translate(573.00px,188.00px) scaleX(0.9368) rotate(0.03deg);">Student GPAs</span>
<span class="t" style="font-size:13.6px;line-height:13.6px;color:#3a3a3a;transform:translate(252.79px,211.30px) scaleX(1.0453) rotate(0.03deg);">CourseID</span>
<span class="t" style="font-size:13.6px;line-height:13.6px;color:#3a3a3a;transform:translate(355.39px,211.30px) scaleX(1.0901) rotate(0.03deg);">CourseTitle</span>
<span class="t" style="font-size:13.6px;line-height:13.6px;color:#3a3a3a;transform:translate(466.60px,211.30px) scaleX(1.0772) rotate(0.03deg);">CreditHour</span>
<span class="t" style="font-size:13.6px;line-height:13.6px;color:#3a3a3a;transform:translate(575.40px,211.30px) scaleX(1.0971) rotate(0.03deg);">Description</span>
<span class="t" style="font-size:13.6px;line-height:13.6px;color:#3a3a3a;font-style:italic;transform:translate(679.40px,211.30px) scaleX(1.0414) rotate(0.03deg);">Click to Add</span>
<span class="t" style="font-size:13.6px;line-height:13.6px;color:#3a3a3a;transform:translate(239.60px,234.10px) scaleX(1.0232) rotate(0.03deg);">200</span>
<span class="t" style="font-size:13.6px;line-height:13.6px;color:#3a3a3a;transform:translate(350.00px,234.10px) scaleX(1.0900) rotate(0.03deg);">Biology</span>
<span class="t" style="font-size:13.6px;line-height:13.6px;color:#3a3a3a;transform:translate(458.96px,234.10px) scaleX(1.0769) rotate(0.03deg);">120</span>
<span class="t" style="font-size:13.6px;line-height:13.6px;color:#3a3a3a;transform:translate(569.19px,234.10px) scaleX(1.0422) rotate(0.03deg);">Science</span>
<span class="t" style="font-size:13.6px;line-height:13.6px;color:#3a3a3a;transform:translate(239.60px,256.05px) scaleX(1.0232) rotate(0.03deg);">205</span>
<span class="t" style="font-size:13.6px;line-height:13.6px;color:#3a3a3a;transform:translate(350.00px,256.05px) scaleX(1.0689) rotate(0.03deg);">Chemistry</span>
<span class="t" style="font-size:13.6px;line-height:13.6px;color:#3a3a3a;transform:translate(458.96px,256.05px) scaleX(1.0769) rotate(0.03deg);">120</span>
<span class="t" style="font-size:13.6px;line-height:13.6px;color:#3a3a3a;transform:translate(569.19px,256.05px) scaleX(1.0422) rotate(0.03deg);">Science</span>
<span class="t" style="font-size:13.6px;line-height:13.6px;color:#3a3a3a;transform:translate(239.60px,278.00px) scaleX(1.0232) rotate(0.03deg);">210</span>
<span class="t" style="font-size:13.6px;line-height:13.6px;color:#3a3a3a;transform:translate(350.00px,278.00px) scaleX(1.0615) rotate(0.03deg);">Geography</span>
<span class="t" style="font-size:13.6px;line-height:13.6px;color:#3a3a3a;transform:translate(458.96px,278.00px) scaleX(1.0769) rotate(0.03deg);">100</span>
<span class="t" style="font-size:13.6px;line-height:13.6px;color:#3a3a3a;transform:translate(569.20px,278.00px) scaleX(1.1077) rotate(0.03deg);">Humanity</span>
<span class="t" style="font-size:13.6px;line-height:13.6px;color:#3a3a3a;transform:translate(239.60px,299.95px) scaleX(1.0232) rotate(0.03deg);">215</span>
<span class="t" style="font-size:13.6px;line-height:13.6px;color:#3a3a3a;transform:translate(350.00px,299.95px) scaleX(1.1290) rotate(0.03deg);">Mathematics</span>
<span class="t" style="font-size:13.6px;line-height:13.6px;color:#3a3a3a;transform:translate(458.96px,299.95px) scaleX(1.0769) rotate(0.03deg);">100</span>
<span class="t" style="font-size:13.6px;line-height:13.6px;color:#3a3a3a;transform:translate(569.19px,299.95px) scaleX(1.0864) rotate(0.03deg);">Core</span>
<span class="t" style="font-size:13.6px;line-height:13.6px;color:#3a3a3a;transform:translate(239.60px,321.90px) scaleX(1.0232) rotate(0.03deg);">220</span>
<span class="t" style="font-size:13.6px;line-height:13.6px;color:#3a3a3a;transform:translate(350.00px,321.90px) scaleX(0.9950) rotate(0.03deg);">Physics</span>
<span class="t" style="font-size:13.6px;line-height:13.6px;color:#3a3a3a;transform:translate(458.96px,321.90px) scaleX(1.0769) rotate(0.03deg);">120</span>
<span class="t" style="font-size:13.6px;line-height:13.6px;color:#3a3a3a;transform:translate(569.19px,321.90px) scaleX(1.0422) rotate(0.03deg);">Science</span>
<span class="t" style="font-size:13.6px;line-height:13.6px;color:#3a3a3a;transform:translate(239.60px,343.85px) scaleX(1.0232) rotate(0.03deg);">225</span>
<span class="t" style="font-size:13.6px;line-height:13.6px;color:#3a3a3a;transform:translate(350.00px,343.85px) scaleX(1.1019) rotate(0.03deg);">History</span>
<span class="t" style="font-size:13.6px;line-height:13.6px;color:#3a3a3a;transform:translate(460.00px,343.85px) scaleX(1.0461) rotate(0.03deg);">80</span>
<span class="t" style="font-size:13.6px;line-height:13.6px;color:#3a3a3a;transform:translate(569.20px,343.85px) scaleX(1.0680) rotate(0.03deg);">Social science</span>
<span class="t" style="font-size:13.6px;line-height:13.6px;color:#3a3a3a;transform:translate(239.60px,365.80px) scaleX(1.0232) rotate(0.03deg);">230</span>
<span class="t" style="font-size:13.6px;line-height:13.6px;color:#3a3a3a;transform:translate(350.00px,365.80px) scaleX(1.0068) rotate(0.03deg);">French</span>
<span class="t" style="font-size:13.6px;line-height:13.6px;color:#3a3a3a;transform:translate(458.93px,365.80px) scaleX(1.1158) rotate(0.03deg);">70</span>
<span class="t" style="font-size:13.6px;line-height:13.6px;color:#3a3a3a;transform:translate(569.20px,365.80px) scaleX(1.0383) rotate(0.03deg);">Language</span>
</div>
</body></html>
